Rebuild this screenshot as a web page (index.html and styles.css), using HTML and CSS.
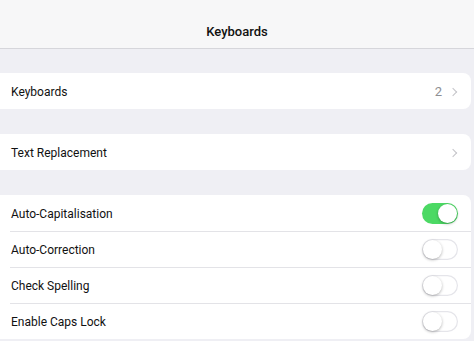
FILE: index.html
```html
<!DOCTYPE html>
<html lang="en">
<head>
  <meta charset="UTF-8">
  <title>Keyboards</title>
  <link rel="stylesheet" href="styles.css">
</head>
<body>

  <header class="navbar">
    <h1>Keyboards</h1>
  </header>

  <div class="group">
    <div class="row">
      <span class="label">Keyboards</span>
      <span class="detail">2</span>
      <span class="chevron"></span>
    </div>
  </div>

  <div class="group">
    <div class="row">
      <span class="label">Text Replacement</span>
      <span class="chevron"></span>
    </div>
  </div>

  <div class="group">
    <div class="row">
      <span class="label">Auto-Capitalisation</span>
      <span class="switch on"></span>
    </div>
    <div class="row">
      <span class="label">Auto-Correction</span>
      <span class="switch"></span>
    </div>
    <div class="row">
      <span class="label">Check Spelling</span>
      <span class="switch"></span>
    </div>
    <div class="row">
      <span class="label">Enable Caps Lock</span>
      <span class="switch"></span>
    </div>
  </div>

</body>
</html>
```

FILE: styles.css
```css
body {
  margin: 0;
  background-color: #efeff4;
  font-family: Roboto, 'Noto Sans', sans-serif;
  font-size: 12px;
  color: #111;
}

.navbar {
  height: 49px;
  box-sizing: border-box;
  padding-top: 14px;
  background-color: #f7f7f8;
  border-bottom: 1px solid #d6d6db;
  display: flex;
  align-items: center;
  justify-content: center;
}

.navbar h1 {
  margin: 0;
  font-size: 13px;
  font-weight: 500;
}

.group {
  background-color: #fff;
  margin: 24px 3px 0 0;
  border-radius: 0 8px 8px 0;
}

.group + .group {
  margin-top: 25px;
}

.row {
  height: 36px;
  display: flex;
  align-items: center;
  padding: 1px 15px 0 11px;
  box-sizing: border-box;
  position: relative;
}

.row + .row::before {
  content: "";
  position: absolute;
  top: 0;
  left: 10px;
  right: 0;
  border-top: 1px solid #e3e3e7;
}

.label {
  flex: 1;
}

.detail {
  color: #8e8e93;
  margin-right: 8px;
  font-size: 13px;
}

.chevron {
  width: 5px;
  height: 5px;
  border-top: 1.3px solid #c4c4c8;
  border-right: 1.3px solid #c4c4c8;
  transform: rotate(45deg);
}

.switch {
  width: 36px;
  height: 21px;
  border-radius: 11px;
  background-color: #fff;
  box-shadow: inset 0 0 0 1.2px #e5e5ea;
  position: relative;
  margin-right: -2px;
}

.switch::after {
  content: "";
  position: absolute;
  top: 1px;
  left: 1px;
  width: 19px;
  height: 19px;
  border-radius: 50%;
  background-color: #fff;
  box-shadow: 0 1px 3px rgba(0, 0, 0, 0.3);
}

.switch.on {
  background-color: #4cd964;
  box-shadow: none;
}

.switch.on::after {
  left: 16px;
}
```
